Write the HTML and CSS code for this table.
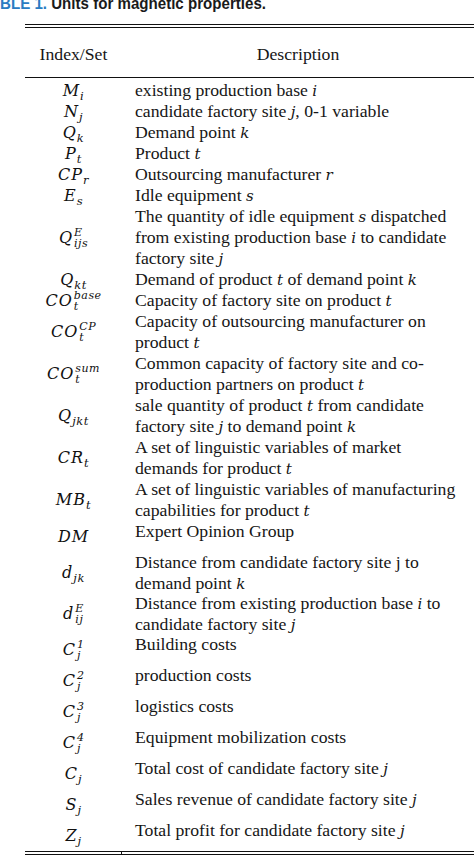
FILE: index.html
```html
<!DOCTYPE html>
<html>
<head>
<meta charset="utf-8">
<link rel="stylesheet" href="styles.css">
</head>
<body>
<div class="caption"><span class="tnum">BLE 1.</span> Units for magnetic properties.</div>
<div class="table">
  <div class="rule2"></div>
  <div class="row head"><div class="sym">Index/Set</div><div class="desc">Description</div></div>
  <div class="tbody">
    <div class="row"><div class="sym"><span class="m">M<sub>i</sub></span></div><div class="desc">existing production base <span class="v">i</span></div></div>
    <div class="row"><div class="sym"><span class="m">N<sub>j</sub></span></div><div class="desc">candidate factory site <span class="v">j</span>, 0-1 variable</div></div>
    <div class="row"><div class="sym"><span class="m">Q<sub>k</sub></span></div><div class="desc">Demand point <span class="v">k</span></div></div>
    <div class="row"><div class="sym"><span class="m">P<sub>t</sub></span></div><div class="desc">Product <span class="v">t</span></div></div>
    <div class="row"><div class="sym"><span class="m">CP<sub>r</sub></span></div><div class="desc">Outsourcing manufacturer <span class="v">r</span></div></div>
    <div class="row"><div class="sym"><span class="m">E<sub>s</sub></span></div><div class="desc">Idle equipment <span class="v">s</span></div></div>
    <div class="row"><div class="sym"><span class="m">Q<span class="ss"><span>E</span><span>ijs</span></span></span></div><div class="desc">The quantity of idle equipment <span class="v">s</span> dispatched from existing production base <span class="v">i</span> to candidate factory site <span class="v">j</span></div></div>
    <div class="row"><div class="sym"><span class="m">Q<sub>kt</sub></span></div><div class="desc">Demand of product <span class="v">t</span> of demand point <span class="v">k</span></div></div>
    <div class="row"><div class="sym"><span class="m">CO<span class="ss"><span>base</span><span>t</span></span></span></div><div class="desc">Capacity of factory site on product <span class="v">t</span></div></div>
    <div class="row"><div class="sym"><span class="m">CO<span class="ss"><span>CP</span><span>t</span></span></span></div><div class="desc">Capacity of outsourcing manufacturer on product <span class="v">t</span></div></div>
    <div class="row"><div class="sym"><span class="m">CO<span class="ss"><span>sum</span><span>t</span></span></span></div><div class="desc">Common capacity of factory site and co-production partners on product <span class="v">t</span></div></div>
    <div class="row"><div class="sym"><span class="m">Q<sub>jkt</sub></span></div><div class="desc">sale quantity of product <span class="v">t</span> from candidate factory site <span class="v">j</span> to demand point <span class="v">k</span></div></div>
    <div class="row"><div class="sym"><span class="m">CR<sub>t</sub></span></div><div class="desc">A set of linguistic variables of market demands for product <span class="v">t</span></div></div>
    <div class="row"><div class="sym"><span class="m">MB<sub>t</sub></span></div><div class="desc">A set of linguistic variables of manufacturing capabilities for product <span class="v">t</span></div></div>
    <div class="row tall"><div class="sym"><span class="m">DM</span></div><div class="desc">Expert Opinion Group</div></div>
    <div class="row pair"><div class="sym"><span class="m">d<sub>jk</sub></span></div><div class="desc">Distance from candidate factory site j to demand point <span class="v">k</span></div></div>
    <div class="row pair"><div class="sym"><span class="m">d<span class="ss"><span>E</span><span>ij</span></span></span></div><div class="desc">Distance from existing production base <span class="v">i</span> to candidate factory site <span class="v">j</span></div></div>
    <div class="row tall"><div class="sym"><span class="m">C<span class="ss"><span>1</span><span>j</span></span></span></div><div class="desc">Building costs</div></div>
    <div class="row tall"><div class="sym"><span class="m">C<span class="ss"><span>2</span><span>j</span></span></span></div><div class="desc">production costs</div></div>
    <div class="row tall"><div class="sym"><span class="m">C<span class="ss"><span>3</span><span>j</span></span></span></div><div class="desc">logistics costs</div></div>
    <div class="row tall"><div class="sym"><span class="m">C<span class="ss"><span>4</span><span>j</span></span></span></div><div class="desc">Equipment mobilization costs</div></div>
    <div class="row tall"><div class="sym"><span class="m">C<sub>j</sub></span></div><div class="desc">Total cost of candidate factory site <span class="v">j</span></div></div>
    <div class="row tall"><div class="sym"><span class="m">S<sub>j</sub></span></div><div class="desc">Sales revenue of candidate factory site <span class="v">j</span></div></div>
    <div class="row tall"><div class="sym"><span class="m">Z<sub>j</sub></span></div><div class="desc">Total profit for candidate factory site <span class="v">j</span></div></div>
  </div>
  <div class="rule2 bottom"><span class="tick"></span></div>
</div>
</body>
</html>
```
FILE: styles.css
```css
html, body {
  margin: 0;
  padding: 0;
  background: #fff;
  overflow: hidden;
}
body {
  width: 474px;
  height: 858px;
  color: #161616;
  font-family: "Liberation Serif", "Times New Roman", serif;
}
.caption {
  margin-top: -5px;
  height: 18px;
  font-family: "Liberation Sans", Arial, sans-serif;
  font-weight: bold;
  font-size: 16.6px;
  line-height: 18px;
  white-space: nowrap;
  color: #1a1a1a;
  transform: scaleX(0.91);
  transform-origin: 0 0;
}
.tnum {
  color: #2a7cc2;
}
.table {
  margin-top: 11px;
  margin-left: 25px;
  width: 449px;
}
.rule2 {
  height: 2px;
  border-top: 1.5px solid #111;
  border-bottom: 1.5px solid #111;
}
.row {
  display: grid;
  grid-template-columns: 97px 1fr;
  font-size: 17.7px;
  line-height: 21px;
}
.row .sym {
  contain: size;
  display: flex;
  align-items: center;
  justify-content: center;
  line-height: 1;
}
.row .desc {
  padding-left: 13px;
  padding-right: 14px;
  align-self: start;
}
.head {
  height: 49px;
  border-bottom: 1px solid #111;
}
.head .sym, .head .desc {
  contain: none;
  padding-top: 16px;
  align-items: flex-start;
  line-height: 21px;
}
.head .desc {
  padding-left: 0;
  padding-right: 0;
  text-align: center;
}
.tbody {
  padding-top: 2px;
}
.row.tall {
  height: 31px;
}
.row.pair {
  line-height: 20.5px;
}
.m {
  font-family: "DejaVu Serif", serif;
  font-style: italic;
  font-size: 16px;
  line-height: 1;
  letter-spacing: 1px;
  white-space: nowrap;
  color: #111;
}
.m sub {
  font-size: 11.5px;
  vertical-align: -4px;
  line-height: 0;
  letter-spacing: 0.5px;
}
.ss {
  display: inline-flex;
  flex-direction: column;
  font-size: 11px;
  line-height: 11px;
  vertical-align: 7px;
  letter-spacing: 0.5px;
  margin-left: 1px;
}
.v {
  font-family: "DejaVu Serif", serif;
  font-style: italic;
  font-size: 15px;
  line-height: 1;
}
.bottom {
  display: flex;
}
.tick {
  display: block;
  width: 96px;
  border-right: 1px solid #111;
  height: 2px;
}
```
